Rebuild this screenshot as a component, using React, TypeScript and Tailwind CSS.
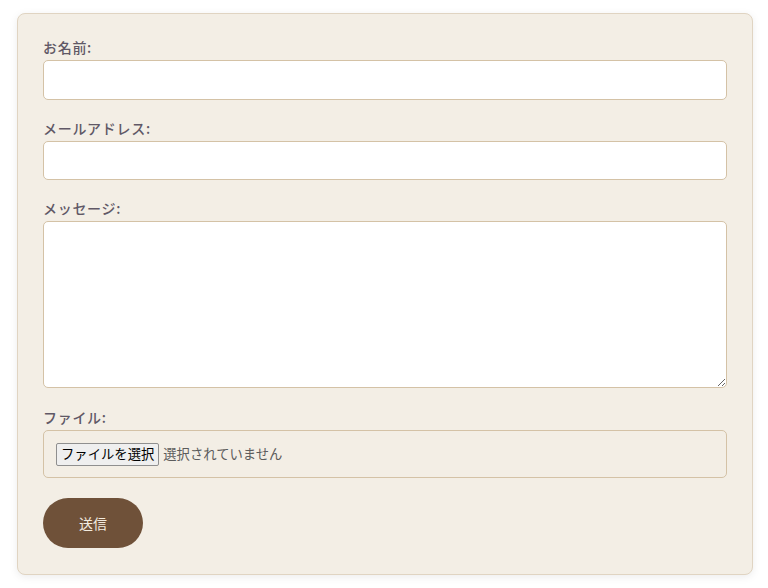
import React from "react";

const font = { fontFamily: '"Noto Sans CJK JP", "Noto Sans", sans-serif' };

function Label({ children }: { children: React.ReactNode }) {
  return (
    <label className="block text-[14px] leading-[21px] mb-[2px] text-[#605866] font-medium tracking-[0.05em]">
      {children}
    </label>
  );
}

export default function App() {
  return (
    <div className="w-[768px] h-[588px] bg-white pt-[13px] pl-[17px]" style={font}>
      <form className="w-[736px] bg-[#f3eee5] border border-[#e0d4c2] rounded-[8px] shadow-[0_2px_8px_rgba(0,0,0,0.08)] px-[25px] pt-[23px] pb-[26px] flex flex-col">
        <div className="mb-[18px]">
          <Label>お名前:</Label>
          <input
            type="text"
            className="block w-full h-[40px] bg-white border border-[#d4c2a6] rounded-[5px] outline-none px-3"
          />
        </div>
        <div className="mb-[18px]">
          <Label>メールアドレス:</Label>
          <input
            type="email"
            className="block w-full h-[39px] bg-white border border-[#d4c2a6] rounded-[5px] outline-none px-3"
          />
        </div>
        <div className="mb-[19px]">
          <Label>メッセージ:</Label>
          <textarea className="block w-full h-[167px] bg-white border border-[#d4c2a6] rounded-[5px] outline-none px-3 py-2 resize-y" />
        </div>
        <div className="mb-[20px]">
          <Label>ファイル:</Label>
          <div className="h-[48px] border border-[#d4c2a6] rounded-[5px] px-[12px] flex items-center">
            <span className="h-[23px] px-[4px] flex items-center bg-[#efefef] border border-[#8f8f8f] rounded-[2px] text-[13.33px] text-black leading-none">
              ファイルを選択
            </span>
            <span className="ml-[4px] text-[13.33px] text-[#5c5c5c]">選択されていません</span>
          </div>
        </div>
        <button
          type="button"
          className="w-[100px] h-[50px] rounded-full bg-[#6f5139] text-[#f3ece0] text-[14px]"
        >
          送信
        </button>
      </form>
    </div>
  );
}
